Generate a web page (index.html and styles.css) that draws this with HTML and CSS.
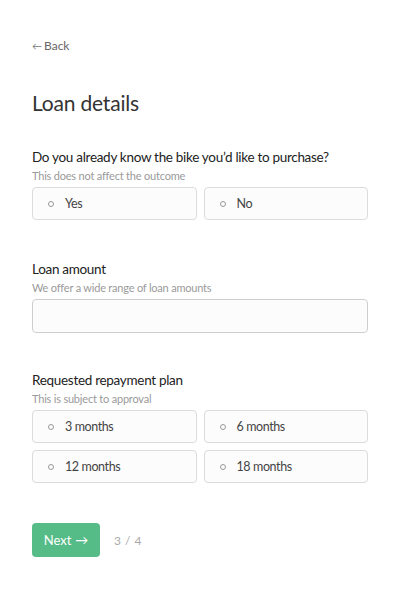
FILE: index.html
```html
<!DOCTYPE html>
<html lang="en">
<head>
<meta charset="utf-8">
<title>Loan details</title>
<link rel="stylesheet" href="styles.css">
</head>
<body>
<main class="page">
  <a class="back" href="#"><span class="back-arrow">&#8592;</span> Back</a>
  <h1 class="title">Loan details</h1>

  <section class="field field-bike">
    <h2 class="label">Do you already know the bike you’d like to purchase?</h2>
    <p class="hint">This does not affect the outcome</p>
    <div class="options">
      <label class="option"><span class="dot"></span>Yes</label>
      <label class="option"><span class="dot"></span>No</label>
    </div>
  </section>

  <section class="field field-amount">
    <h2 class="label">Loan amount</h2>
    <p class="hint">We offer a wide range of loan amounts</p>
    <div class="input"></div>
  </section>

  <section class="field field-plan">
    <h2 class="label">Requested repayment plan</h2>
    <p class="hint">This is subject to approval</p>
    <div class="options">
      <label class="option"><span class="dot"></span>3 months</label>
      <label class="option"><span class="dot"></span>6 months</label>
      <label class="option"><span class="dot"></span>12 months</label>
      <label class="option"><span class="dot"></span>18 months</label>
    </div>
  </section>

  <div class="footer">
    <button class="next">Next <span class="next-arrow">&#8594;</span></button>
    <span class="step">3 / 4</span>
  </div>
</main>
</body>
</html>
```

FILE: styles.css
```css
* { box-sizing: border-box; }
html, body { margin: 0; padding: 0; background: #ffffff; }
body {
  font-family: "Lato", "Open Sans", sans-serif;
  color: #333;
}
.page {
  width: 400px;
  padding: 38px 32px 0 32px;
  display: flex;
  flex-direction: column;
}
.back {
  font-size: 12px;
  line-height: 16px;
  color: #666;
  text-decoration: none;
  display: flex;
  align-items: center;
  gap: 2px;
}
.back-arrow { font-size: 10px; color: #777; }
.title {
  margin: 35px 0 0 0;
  font-size: 21px;
  line-height: 28px;
  font-weight: 400;
  letter-spacing: -0.2px;
  color: #333;
}
.field-bike { margin-top: 31px; }
.field-amount { margin-top: 40px; }
.field-plan { margin-top: 38px; }
.label {
  margin: 0;
  font-size: 13.5px;
  line-height: 18px;
  font-weight: 400;
  letter-spacing: -0.3px;
  color: #222;
}
.hint {
  margin: 3px 0 0 0;
  font-size: 11px;
  line-height: 14px;
  letter-spacing: -0.2px;
  color: #9a9a9a;
}
.options {
  margin-top: 4px;
  display: grid;
  grid-template-columns: 1fr 1fr;
  gap: 7px;
}
.option {
  height: 33px;
  border: 1px solid #dcdcdc;
  border-radius: 4px;
  background: #fcfcfc;
  display: flex;
  align-items: center;
  padding-left: 15px;
  font-size: 12.5px;
  letter-spacing: -0.4px;
  color: #444;
}
.dot {
  width: 6px;
  height: 6px;
  border: 1px solid #999;
  border-radius: 50%;
  margin-right: 11px;
}
.input {
  margin-top: 4px;
  height: 34px;
  border: 1px solid #cfcfcf;
  border-radius: 4px;
  background: #fcfcfc;
}
.footer {
  margin-top: 40px;
  display: flex;
  align-items: center;
  gap: 14px;
}
.next {
  width: 68px;
  height: 34px;
  border: none;
  border-radius: 4px;
  background: #55bb87;
  color: #fff;
  font-family: inherit;
  font-size: 13px;
  display: flex;
  align-items: center;
  justify-content: center;
  gap: 4px;
  padding: 0;
}
.next-arrow { font-size: 13px; }
.step { font-size: 12px; color: #aaa; letter-spacing: 0.5px; }
```
